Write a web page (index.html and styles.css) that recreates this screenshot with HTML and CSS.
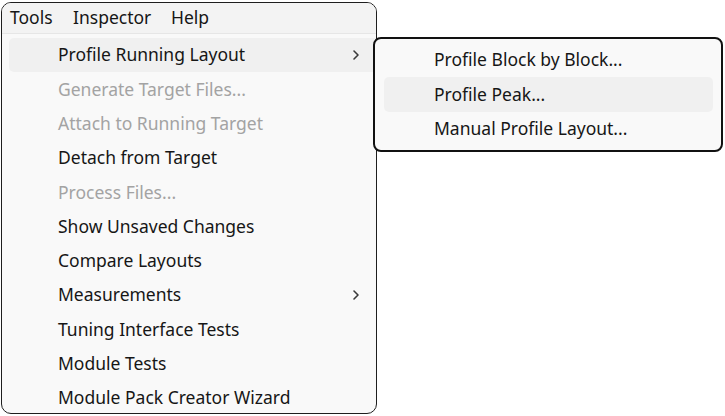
FILE: index.html
```html
<!DOCTYPE html>
<html>
<head>
<meta charset="utf-8">
<link rel="stylesheet" href="styles.css">
</head>
<body>
<div class="window">
  <div class="menubar">
    <span class="mb-item mb-tools">Tools</span>
    <span class="mb-item mb-inspector">Inspector</span>
    <span class="mb-item mb-help">Help</span>
  </div>
  <ul class="menu">
    <li class="item hover">Profile Running Layout<svg class="chev" viewBox="0 0 8 12" width="8" height="12"><path d="M2 2 L6 6 L2 10" fill="none" stroke="#3a3a3a" stroke-width="1.6" stroke-linecap="round" stroke-linejoin="round"/></svg></li>
    <li class="item disabled">Generate Target Files...</li>
    <li class="item disabled">Attach to Running Target</li>
    <li class="item">Detach from Target</li>
    <li class="item disabled">Process Files...</li>
    <li class="item">Show Unsaved Changes</li>
    <li class="item">Compare Layouts</li>
    <li class="item">Measurements<svg class="chev" viewBox="0 0 8 12" width="8" height="12"><path d="M2 2 L6 6 L2 10" fill="none" stroke="#3a3a3a" stroke-width="1.6" stroke-linecap="round" stroke-linejoin="round"/></svg></li>
    <li class="item">Tuning Interface Tests</li>
    <li class="item">Module Tests</li>
    <li class="item">Module Pack Creator Wizard</li>
  </ul>
</div>
<ul class="submenu">
  <li class="sitem">Profile Block by Block...</li>
  <li class="sitem hover">Profile Peak...</li>
  <li class="sitem">Manual Profile Layout...</li>
</ul>
</body>
</html>
```
FILE: styles.css
```css
html, body {
  margin: 0;
  padding: 0;
  background: #ffffff;
}
body {
  font-family: "Noto Sans", "Open Sans", sans-serif;
  font-size: 17.5px;
  color: #161616;
  position: relative;
  width: 725px;
  height: 416px;
  overflow: hidden;
}
.window {
  margin: 2px 0 0 1px;
  width: 374px;
  height: 410px;
  border: 1px solid #1e1e1e;
  border-radius: 10px;
  overflow: hidden;
  background: #f9f9f9;
}
.menubar {
  height: 30px;
  background: #f3f3f3;
  border-bottom: 1px solid #e6e6e6;
  display: flex;
  align-items: center;
  padding-left: 8px;
}
.mb-item {
  display: inline-block;
  line-height: 1;
}
.mb-tools { width: 63px; }
.mb-inspector { width: 98px; }
.menu {
  list-style: none;
  margin: 0;
  padding: 4px 0 0 0;
}
.item {
  height: 34.3px;
  margin: 0 0 0 7px;
  padding-left: 49px;
  display: flex;
  align-items: center;
  border-radius: 5px;
  position: relative;
  line-height: 1;
}
.item.hover {
  background: #f0f0f0;
  border-radius: 5px 0 0 5px;
}
.item.disabled {
  color: #a3a3a3;
}
.chev {
  position: absolute;
  left: 343px;
  top: 11px;
}
.submenu {
  position: absolute;
  left: 373px;
  top: 37px;
  width: 346px;
  height: 107px;
  margin: 0;
  padding: 4px 0 0 0;
  box-sizing: content-box;
  list-style: none;
  border: 2px solid #111111;
  border-radius: 8px;
  background: #f9f9f9;
}
.sitem {
  height: 34.3px;
  margin: 0 8px 0 9px;
  padding-left: 50px;
  display: flex;
  align-items: center;
  border-radius: 5px;
  line-height: 1;
}
.sitem.hover {
  background: #f0f0f0;
}
```
